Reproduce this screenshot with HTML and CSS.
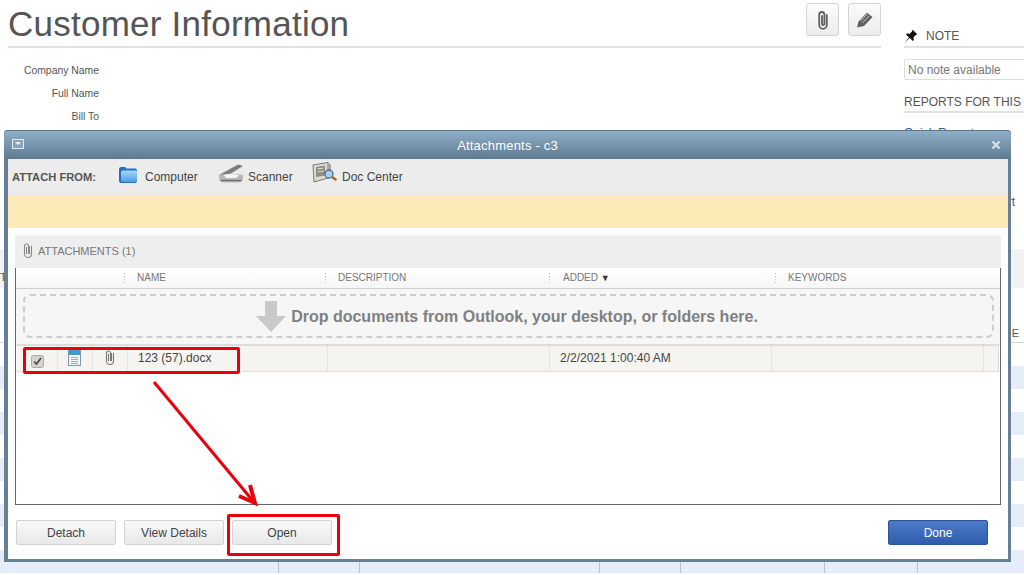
FILE: index.html
```html
<!DOCTYPE html>
<html lang="en">
<head>
<meta charset="utf-8">
<title>Customer Information</title>
<link rel="stylesheet" href="styles.css">
</head>
<body>
<div class="page">
  <div class="top">
    <div class="info">
      <div class="info-head">
        <h1>Customer Information</h1>
        <div class="head-btns">
          <button class="sq-btn"><svg width="14" height="20" viewBox="0 0 14 20"><path d="M10.800 5v10a3.800 3.800 0 0 1-7.600 0V4.600a2.600 2.600 0 0 1 5.200 0V14a1.200 1.200 0 0 1-2.400 0V6" fill="none" stroke="#5f5f5f" stroke-width="1.800" stroke-linecap="round"/></svg></button>
          <button class="sq-btn"><svg width="18" height="18" viewBox="0 0 18 18"><path d="M1 16.500l1.500-6 8.500-9 5.500 4.500-8.500 9z" fill="#5f5f5f"/><path d="M4.500 10l7-7.500M6.500 12l7-7.500" stroke="#eee" stroke-width=".8"/></svg></button>
        </div>
      </div>
      <dl class="fields">
        <dt>Company Name</dt>
        <dt>Full Name</dt>
        <dt>Bill To</dt>
      </dl>
    </div>
    <aside class="side">
      <div class="note-head"><svg width="14" height="14" viewBox="0 0 14 14"><path d="M8.500.5l5 5-1.500.3-2.500 2.400.3 2.800-1 1-3-3L.5 13.500l4.500-5-3-3 1-1 2.800.3L8.200 2.300z" fill="#111"/></svg>NOTE</div>
      <div class="note-box">No note available</div>
      <div class="reports">REPORTS FOR THIS CUSTOMER</div>
      <div class="side-link link-a">Quick Report</div>
      <div class="side-link link-b">Transaction List Report</div>
    </aside>
  </div>
  <div class="bg-table">
    <div class="bg-head">T<span>E</span></div>
    <div class="bg-row"></div>
    <div class="bg-row blue"></div>
    <div class="bg-row"></div>
    <div class="bg-row blue"></div>
    <div class="bg-row"></div>
    <div class="bg-row blue"></div>
    <div class="bg-row"></div>
    <div class="bg-row blue"></div>
    <div class="bg-row"></div>
    <div class="bg-row blue cols"><i></i><i></i><i></i><i></i><i></i><i></i></div>
  </div>
</div>

<section class="dialog">
  <header class="titlebar">
    <span class="tb-menu"></span>
    <span class="tb-title">Attachments - c3</span>
    <svg class="tb-close" width="10" height="10" viewBox="0 0 10 10"><path d="M1.500 1.500l7 7M8.500 1.500l-7 7" stroke="#d5dee6" stroke-width="2.400"/></svg>
  </header>
  <div class="toolbar">
    <strong class="from">ATTACH FROM:</strong>
    <span class="src src-computer">
      <svg width="20" height="18" viewBox="0 0 20 18"><defs><linearGradient id="fold" x1="0" y1="0" x2="0" y2="1"><stop offset="0" stop-color="#a5d8f7"/><stop offset="1" stop-color="#4a9fe2"/></linearGradient></defs><path d="M1 4q0-3 2-3h4l1.500 1.500H17q2 0 2 2v10q0 2.500-2.500 2.500H3q-2 0-2-2.500z" fill="#1f6fc4"/><path d="M3 6q0-1.500 1.500-1.500H18q1 0 1 1.500v8q0 2-2 2H4q-1 0-1-2z" fill="url(#fold)"/></svg>Computer</span>
    <span class="src src-scanner">
      <svg width="26" height="20" viewBox="0 0 26 20"><path d="M1 11L20 .5l5 1.500-13 8z" fill="#7d7d7d"/><path d="M1 11q12-3 24 0l0 5q-1 2.500-4 2.500H5q-3 0-4-3z" fill="#b8b8b8"/><path d="M6 11q7-2 15 0l-3 3H8z" fill="#f6f6f6"/><path d="M3 16.500h20" stroke="#6a6a6a" stroke-width="1.400"/></svg>Scanner</span>
    <span class="src src-doc">
      <svg width="26" height="22" viewBox="0 0 26 22"><path d="M1 3l15-2.500V16L2 20z" fill="#dedbd4" stroke="#777"/><path d="M16 .5l3 2V11l-3 5z" fill="#a9a69f"/><path d="M4 5l9-1.500v10L4 15z" fill="#8f8b83"/><path d="M5.500 7l6-1M5.500 10l6-1" stroke="#e8e5de"/><circle cx="17" cy="12" r="4" fill="#a9d0ef" stroke="#4f6f92" stroke-width="1.300"/><path d="M20 15l4.500 3" stroke="#a8651e" stroke-width="2.200"/></svg>Doc Center</span>
  </div>
  <div class="notice"></div>
  <div class="content">
    <div class="att-head">
      <svg width="10" height="15" viewBox="0 0 10 15"><path d="M8.500 3v8a3.500 3.500 0 0 1-7 0V3a2 2 0 0 1 4 0v8M3.500 4v7M6.500 3v8" fill="none" stroke="#8a8a8a" stroke-width="1.100"/></svg>
      ATTACHMENTS (1)
    </div>
    <div class="table-box">
      <div class="col-head">
        <span class="ch ch-0"></span>
        <span class="ch ch-name">NAME</span>
        <span class="ch ch-desc">DESCRIPTION</span>
        <span class="ch ch-added">ADDED <b>▼</b></span>
        <span class="ch ch-key">KEYWORDS</span>
      </div>
      <div class="drop-wrap">
        <div class="drop">
          <svg width="30" height="31" viewBox="0 0 30 31"><path d="M9 0h12v15h9L15 31 0 15h9z" fill="#c9c9c9"/></svg>
          <span>Drop documents from Outlook, your desktop, or folders here.</span>
        </div>
      </div>
      <div class="file-row">
        <span class="fc fc-check"><svg width="13" height="13" viewBox="0 0 13 13"><rect x=".5" y=".5" width="12" height="12" rx="2" fill="#d2d2d2" stroke="#aaa"/><path d="M3 6.500l2.500 2.500 4.500-6" fill="none" stroke="#444" stroke-width="1.600"/></svg></span>
        <span class="fc fc-icon"><svg width="13" height="17" viewBox="0 0 13 17"><rect x=".5" y=".5" width="12" height="16" fill="#f4f8fb" stroke="#7d9ab3"/><rect x="1" y="1" width="11" height="5" fill="#3c9ad1"/><path d="M3 8.500h7M3 10.500h7M3 12.500h7M3 14.500h7" stroke="#9aa8b3"/></svg></span>
        <span class="fc fc-clip"><svg width="10" height="15" viewBox="0 0 10 15"><path d="M8.500 3v8a3.500 3.500 0 0 1-7 0V3a2 2 0 0 1 4 0v8M3.500 4v7M6.500 3v8" fill="none" stroke="#777" stroke-width="1.100"/></svg></span>
        <span class="fc fc-name">123 (57).docx</span>
        <span class="fc fc-desc"></span>
        <span class="fc fc-added">2/2/2021 1:00:40 AM</span>
        <span class="fc fc-key"></span>
        <span class="fc fc-end"></span>
      </div>
    </div>
    <div class="actions">
      <button class="btn">Detach</button>
      <button class="btn">View Details</button>
      <button class="btn">Open</button>
      <button class="btn done">Done</button>
    </div>
  </div>
</section>

<div class="mark mark-row"></div>
<div class="mark mark-open"></div>
<svg class="arrow" width="120" height="135" viewBox="0 0 120 135"><path d="M2 1L101 120" fill="none" stroke="#e8000b" stroke-width="3"/><path d="M87 115L103 122 98 104" fill="none" stroke="#e8000b" stroke-width="4"/></svg>
</body>
</html>
```

FILE: styles.css
```css
* { box-sizing: border-box; }
html, body { margin: 0; height: 575px; overflow: hidden; background: #fff; }
body { font-family: "Liberation Sans", Arial, sans-serif; color: #444; position: relative; width: 1024px; }

/* background page */
.page { display: flex; flex-direction: column; height: 575px; overflow: hidden; }
.top { display: flex; height: 249px; padding-left: 8px; flex: none; }
.info { width: 873px; flex: none; }
.info-head { display: flex; justify-content: space-between; height: 48px; border-bottom: 2px solid #e2e2e2; padding-top: 3px; }
h1 { margin: 0; font-size: 35px; font-weight: 400; color: #555; line-height: 41px; letter-spacing: .24px; }
.head-btns { display: flex; gap: 9px; }
.sq-btn { width: 33px; height: 33px; border: 1px solid #d4d4d4; border-radius: 3px; background: linear-gradient(#fbfbfb, #ececec); padding: 0; display: flex; align-items: center; justify-content: center; }
.fields { margin: 11px 0 0; width: 91px; }
.fields dt { font-size: 10.400px; line-height: 23px; text-align: right; color: #555; }
.side { margin-left: 23px; flex: 1; min-width: 0; white-space: nowrap; overflow: hidden; }
.note-head { height: 48px; border-bottom: 2px solid #e2e2e2; padding-top: 29px; font-size: 12px; line-height: 15px; color: #555; display: flex; gap: 8px; align-items: center; padding-bottom: 3px; }
.note-box { margin-top: 11px; height: 21px; width: 140px; border: 1px solid #ddd; border-radius: 2px; font-size: 12px; line-height: 20px; padding-left: 3px; color: #777; }
.reports { margin-top: 14px; height: 19px; padding-top: 1px; border-bottom: 2px solid #e2e2e2; font-size: 12px; line-height: 15px; color: #555; }
.side-link { color: #2d5f9e; font-size: 12px; line-height: 14px; }
.link-a { margin-top: 13px; }
.link-b { margin-top: 55px; width: 111px; display: flex; justify-content: flex-end; }
.bg-table { flex: 1; display: flex; flex-direction: column; }
.bg-head { height: 94px; position: relative; font-size: 11px; line-height: 56px; color: #555; background: linear-gradient(#f2f2f2 0, #f2f2f2 39px, #fff 39px); border-bottom: 1px solid #d5d5d5; flex: none; }
.bg-head span { position: absolute; right: 5px; top: 0; line-height: 168px; }
.bg-row { height: 23px; flex: none; }
.bg-row.blue { background: #e4edf9; }
.cols { display: flex; }
.cols i { border-right: 1px solid #b9c2cc; }
.cols i:nth-child(1) { width: 279px; }
.cols i:nth-child(2) { width: 81px; }
.cols i:nth-child(3) { width: 240px; }
.cols i:nth-child(4) { width: 81px; }
.cols i:nth-child(5) { width: 144px; }
.cols i:nth-child(6) { width: 93px; }

/* dialog */
.dialog { position: absolute; left: 4px; top: 130px; width: 1007px; height: 432px; background: #fff; border: solid #667f95; border-width: 0 3px 3px 4px; border-radius: 4px 4px 0 0; display: flex; flex-direction: column; }
.titlebar { height: 29px; flex: none; margin: 0 -3px 0 -4px; padding: 0 10px 0 8px; background: linear-gradient(#8fafc8, #5e7a91); border-radius: 4px 4px 0 0; border-top: 1px solid #5b7a92; display: flex; align-items: center; position: relative; }
.tb-menu { width: 12px; height: 10px; border: 1px solid #dfe6ec; background: #8aa3b8; margin-bottom: 3px; position: relative; }
.tb-menu::after { content: ""; position: absolute; left: 2px; top: 2px; border: 3px solid transparent; border-top-color: #f0f4f7; }
.tb-title { position: absolute; left: 0; right: 0; text-align: center; color: #fff; font-size: 13px; letter-spacing: .2px; top: 7px; line-height: 16px; }
.tb-close { margin-left: auto; }
.toolbar { height: 36px; flex: none; background: #ececec; position: relative; display: flex; align-items: center; padding-left: 4px; font-size: 12px; color: #444; }
.from { font-size: 11.200px; color: #555; width: 106px; }
.src { display: inline-flex; align-items: center; }
.src-computer { gap: 7px; width: 100px; }
.src-computer svg { margin-top: -4px; }
.src-scanner { gap: 4px; width: 94px; }
.src-scanner svg { margin-top: -6px; }
.src-doc { gap: 4px; }
.src-doc svg { margin-top: -8px; }
.notice { height: 33px; flex: none; background: #fcebb6; }
.content { flex: 1; min-height: 0; padding: 7px 7px 0 7px; display: flex; flex-direction: column; }
.att-head { height: 33px; flex: none; background: #eee; display: flex; align-items: center; gap: 5px; padding-left: 8px; padding-bottom: 2px; font-size: 11px; color: #777; }
.table-box { height: 237px; flex: none; border: solid #666; border-width: 0 1px 1px 1px; display: flex; flex-direction: column; }
.col-head { height: 21px; flex: none; display: flex; background: linear-gradient(#fff, #f6f6f6); border-bottom: 1px solid #cfcfcf; font-size: 10px; color: #777; line-height: 19px; }
.ch { padding-left: 13px; background: repeating-linear-gradient(#bbb 0 1px, transparent 1px 3px) left 5px / 1px 11px no-repeat; }
.ch-0 { width: 108px; background: none; }
.ch-name { width: 201px; }
.ch-desc { width: 224px; }
.ch-added { width: 226px; padding-left: 14px; }
.ch-added b { font-size: 9px; color: #333; font-weight: 400; }
.ch-key { flex: 1; }
.drop-wrap { height: 56px; flex: none; background: #f6f6f6; border-bottom: 1px solid #ddd; padding: 5px 6px 6px 7px; }
.drop { height: 44px; border: 2px dashed #cdcdcd; border-radius: 7px; display: flex; align-items: center; justify-content: center; gap: 5px; font-size: 16px; font-weight: 700; color: #808080; }
.drop svg { margin-left: -3px; }
.drop span { padding-top: 1px; }
.file-row { height: 27px; flex: none; margin: 0 1px; background: #f5f4f1; border: solid #ddd; border-width: 1px 1px 1px 0; display: flex; font-size: 12px; color: #444; }
.fc { border-right: 1px solid #e4e4e2; display: flex; align-items: center; flex: none; height: 25px; padding-bottom: 2px; }
.fc-check { width: 41px; padding-left: 14px; padding-top: 5px; padding-bottom: 0; }
.fc-icon { width: 35px; padding-left: 10px; }
.fc-clip { width: 35px; padding-left: 12px; }
.fc-name { width: 200px; padding-left: 10px; }
.fc-desc { width: 222px; }
.fc-added { width: 222px; padding-left: 10px; }
.fc-key { width: 212px; }
.fc-end { flex: 1; border-right: 0; }
.actions { flex: 1; display: flex; gap: 8px; padding: 15px 13px 0 0; align-items: flex-start; margin-left: 1px; }
.btn { width: 100px; height: 25px; padding: 0; border: 1px solid #d2d2d2; border-radius: 2px; background: linear-gradient(#f9f9f9, #e8e8e8); font: 12px "Liberation Sans", Arial, sans-serif; color: #444; }
.btn.done { margin-left: auto; background: linear-gradient(#4d7cc9, #2f5cab); border-color: #2b5296; color: #fff; }

/* red annotations */
.mark { position: absolute; border: 3px solid #e8000b; border-radius: 2px; }
.mark-row { left: 23px; top: 347px; width: 217px; height: 27px; }
.mark-open { left: 227px; top: 514px; width: 113px; height: 42px; }
.arrow { position: absolute; left: 152px; top: 381px; }
```
